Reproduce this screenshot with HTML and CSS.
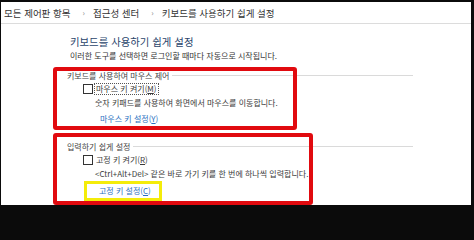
FILE: index.html
```html
<!DOCTYPE html>
<html lang="ko">
<head>
<meta charset="utf-8">
<link rel="stylesheet" href="styles.css">
</head>
<body>
<div class="page">
  <div class="crumbs">
    <span>모든 제어판 항목</span><span class="sep">›</span><span>접근성 센터</span><span class="sep">›</span><span>키보드를 사용하기 쉽게 설정</span>
  </div>
  <div class="content">
    <div class="head">
      <h1 class="title">키보드를 사용하기 쉽게 설정</h1>
      <p class="sub">이러한 도구를 선택하면 로그인할 때마다 자동으로 시작됩니다.</p>
    </div>

    <section class="group g1">
      <div class="legend"><span class="legend-text">키보드를 사용하여 마우스 제어</span><span class="rule"></span></div>
      <div class="check-row"><span class="box"></span><span class="label focus">마우스 키 켜기(<u>M</u>)</span></div>
      <div class="desc">숫자 키패드를 사용하여 화면에서 마우스를 이동합니다.</div>
      <div class="link-row"><span class="link">마우스 키 설정(<u>Y</u>)</span></div>
      <div class="mark red"></div>
    </section>

    <section class="group g2">
      <div class="legend"><span class="legend-text">입력하기 쉽게 설정</span><span class="rule"></span></div>
      <div class="check-row"><span class="box"></span><span class="label">고정 키 켜기(<u>R</u>)</span></div>
      <div class="desc">&lt;Ctrl+Alt+Del&gt; 같은 바로 가기 키를 한 번에 하나씩 입력합니다.</div>
      <div class="link-row"><span class="yellow"><span class="link">고정 키 설정(<u>C</u>)</span></span></div>
      <div class="mark red"></div>
    </section>
  </div>
</div>
</body>
</html>
```
FILE: styles.css
```css
html, body {
  margin: 0;
  padding: 0;
  background: #0b0b0b;
}
body {
  font-family: "Noto Sans CJK KR", "Noto Sans", sans-serif;
  color: #3a3a3a;
}
.page {
  margin: 2px 3px 3px 1px;
  width: 470px;
  height: 203px;
  background: #fff;
  overflow: hidden;
}
.crumbs {
  height: 21px;
  border-bottom: 1px solid #dcdcdc;
  display: flex;
  align-items: center;
  padding-left: 3px;
  font-size: 9.5px;
  color: #333;
  white-space: nowrap;
}
.crumbs .sep {
  color: #888;
  font-size: 8px;
  margin: 0 8px 0 12px;
}
.content {
  padding-top: 11px;
}
.head {
  padding-left: 69px;
}
.title {
  margin: 0;
  font-weight: normal;
  font-size: 10.4px;
  line-height: 14px;
  color: #2a456b;
}
.sub {
  margin: 1px 0 0;
  font-size: 8px;
  line-height: 11px;
  color: #333;
}
.group {
  position: relative;
  margin-left: 52px;
  font-size: 8px;
  color: #3a3a3a;
}
.g1 {
  margin-top: 6px;
  width: 244px;
  height: 63px;
  padding-top: 2px;
  box-sizing: border-box;
}
.g2 {
  margin-top: 3px;
  width: 260px;
  height: 72px;
  padding-top: 7px;
  box-sizing: border-box;
}
.legend {
  display: flex;
  align-items: center;
  height: 12px;
  margin-left: 14px;
  width: 346px;
  white-space: nowrap;
}
.legend-text {
  color: #444;
}
.rule {
  flex: 1;
  height: 1px;
  background: #dadada;
  margin-left: 3px;
}
.check-row {
  display: flex;
  align-items: center;
  height: 14px;
  margin-top: 1px;
  margin-left: 30px;
}
.box {
  width: 8px;
  height: 8px;
  border: 1px solid #333;
  background: #fff;
  margin-right: 1px;
}
.label {
  padding: 0 1px;
  line-height: 10px;
  border: 1px solid transparent;
}
.label.focus {
  border: 1px dotted #555;
}
.desc {
  height: 14px;
  line-height: 14px;
  margin-left: 42px;
  white-space: nowrap;
}
.link-row {
  margin-top: 2px;
  height: 14px;
  line-height: 14px;
  margin-left: 47px;
}
.link {
  color: #2a6fc0;
}
.g2 .link-row {
  margin-top: 0;
  margin-left: 31px;
  height: 20px;
}
.yellow {
  display: inline-block;
  box-sizing: border-box;
  width: 78px;
  height: 20px;
  line-height: 14px;
  border: 3px solid #f4ec0a;
  padding-left: 12px;
}
.mark {
  position: absolute;
  inset: 0;
  pointer-events: none;
}
.mark.red {
  border: 4px solid #e10a0f;
  border-radius: 3px;
}
```
